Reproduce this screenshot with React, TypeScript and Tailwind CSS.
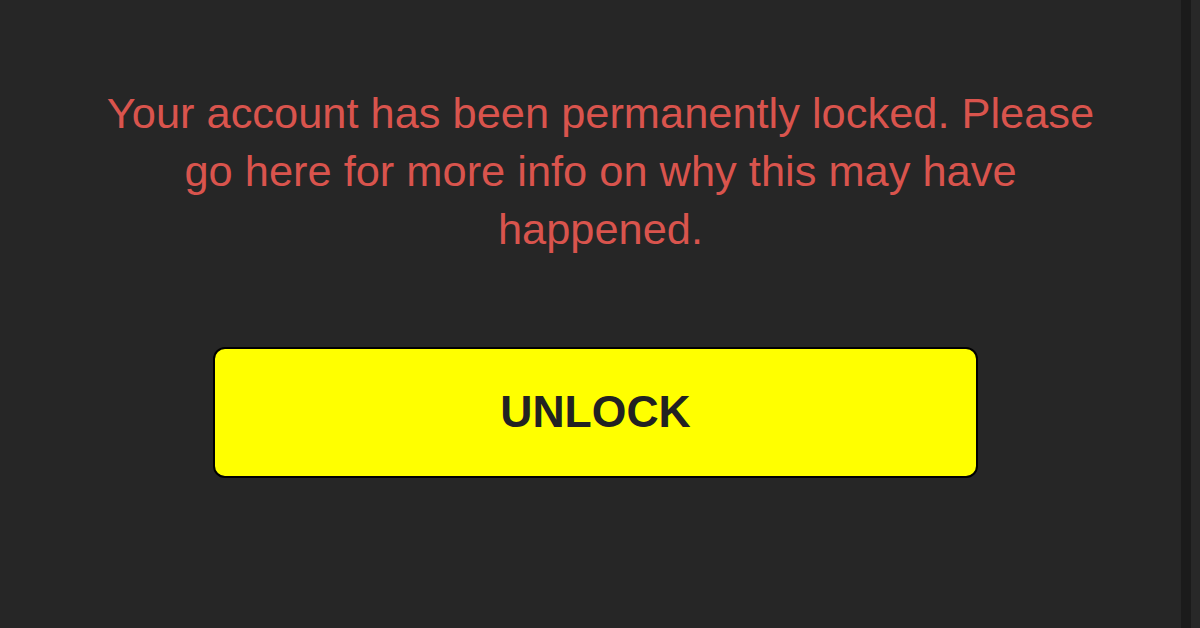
export default function App() {
  return (
    <div className="flex h-[628px] w-[1200px] overflow-hidden bg-[#262626] font-['Liberation_Sans',Arial,sans-serif]">
      <div className="flex flex-1 flex-col items-center pl-[20px] pt-[84px]">
        <p className="w-[1010px] text-center text-[43.4px] leading-[58px] text-[#d9544d]">
          Your account has been permanently locked. Please go here for more info on why this may have happened.
        </p>
        <button className="mt-[89px] ml-[-10px] flex h-[131px] w-[765px] items-center justify-center rounded-[12px] border-2 border-black bg-[#ffff00] text-[44.5px] font-bold text-[#222222]">
          UNLOCK
        </button>
      </div>
      <div className="w-[10px] bg-[#1b1b1b]" />
      <div className="w-[9px] bg-[#282828]" />
    </div>
  );
}
